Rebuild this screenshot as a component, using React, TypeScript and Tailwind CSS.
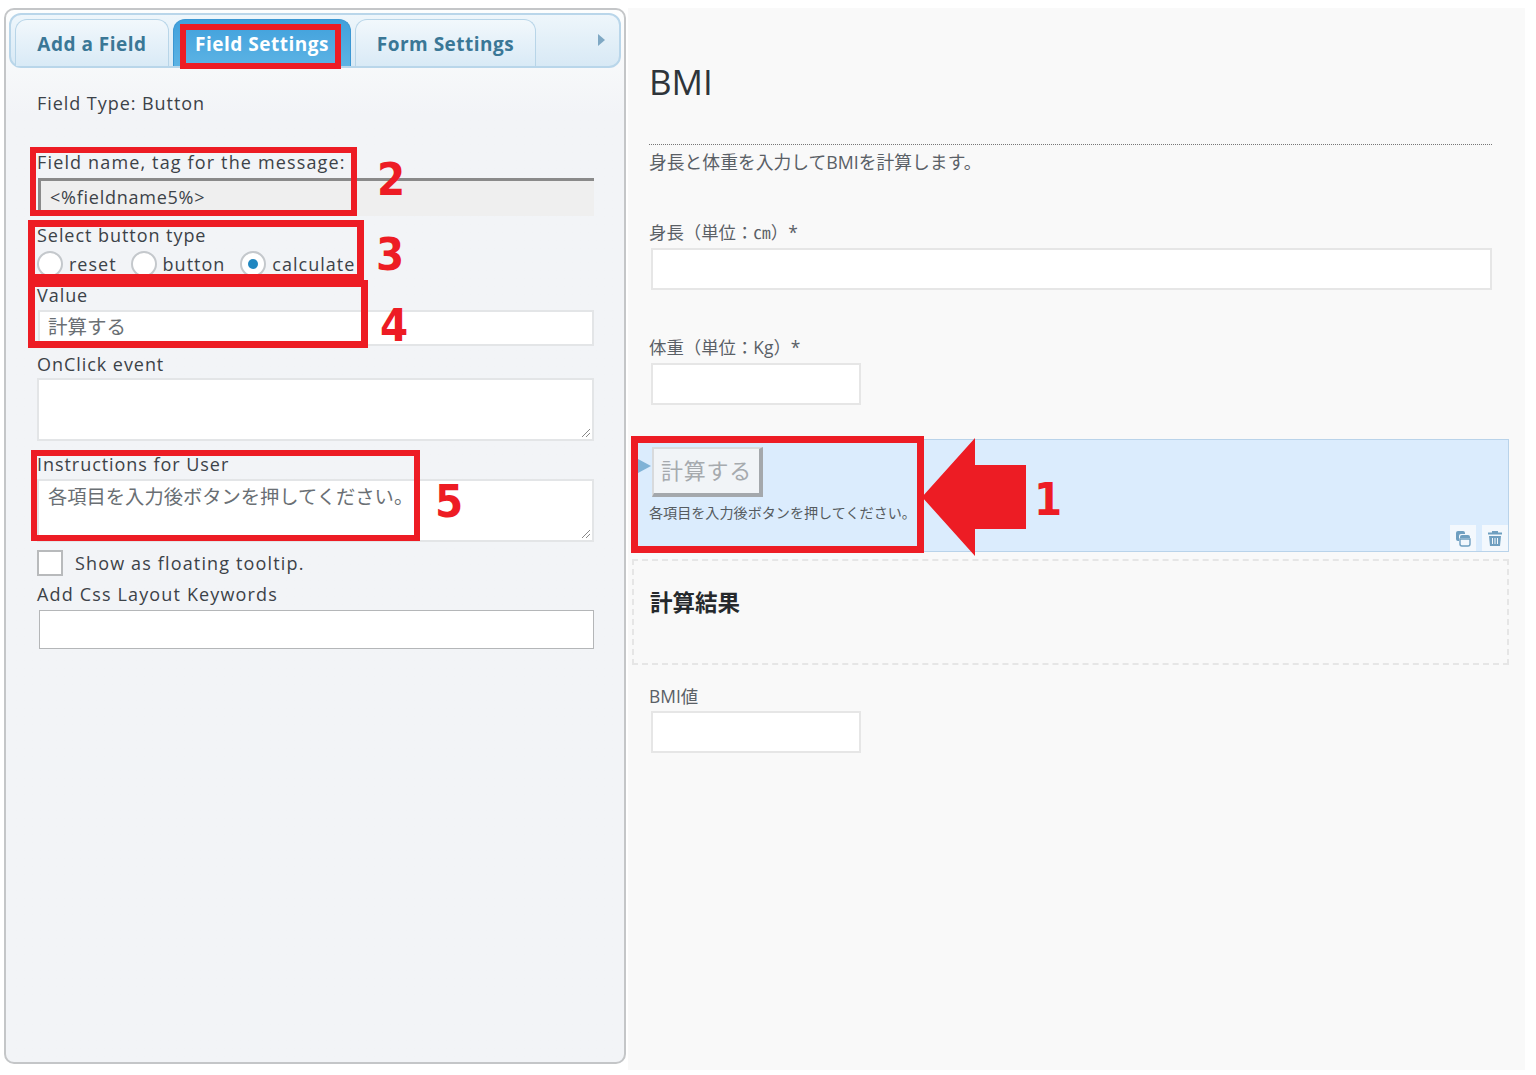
const font = "font-['Open_Sans','Noto_Sans_CJK_JP',sans-serif]";

const Label = ({ text, wide, className = "" }: { text: string; wide?: boolean; className?: string }) => (
  <div
    className={
      "h-[24px] text-[18px] leading-[24px] text-[#3c4248] whitespace-nowrap " +
      (wide ? "tracking-[1.15px] " : "tracking-[0.95px] ") +
      className
    }
  >
    {text}
  </div>
);

const Radio = ({ text, checked }: { text: string; checked?: boolean }) => (
  <div className="flex items-center">
    <span className="flex h-[26px] w-[26px] items-center justify-center rounded-full border-2 border-[#c4c8cc] bg-white">
      {checked && <span className="h-[10px] w-[10px] rounded-full bg-[#2187c0]" />}
    </span>
    <span className="ml-[6px] text-[18px] leading-[24px] tracking-[1px] text-[#3c4248]">{text}</span>
  </div>
);

const Grip = () => (
  <svg className="absolute bottom-[1px] right-[1px]" width="10" height="10" viewBox="0 0 10 10">
    <path d="M1 9 L9 1 M5 9 L9 5" stroke="#888" strokeWidth="1" />
  </svg>
);

const Tab = ({ text, active, width }: { text: string; active?: boolean; width: string }) => (
  <div
    className={
      width +
      " flex h-[47px] items-center justify-center rounded-t-[12px] border border-b-0 pt-[3px] text-[19px] font-bold tracking-[0.5px] " +
      (active
        ? "border-[#3b97d3] bg-gradient-to-b from-[#3fa0dc] to-[#5cb3e4] text-white"
        : "border-[#b8d5e8] bg-gradient-to-b from-[#f2f8fc] to-[#d9eaf6] text-[#3a7796]")
    }
  >
    {text}
  </div>
);

const Box = ({ className }: { className: string }) => (
  <div className={"absolute border-[#ed1c24] " + className} />
);

const Num = ({ text, className }: { text: string; className: string }) => (
  <div className={"absolute font-['DejaVu_Sans',sans-serif] text-[45px] font-bold leading-none text-[#ed1c24] [font-stretch:condensed] " + className}>
    {text}
  </div>
);

const FormLabel = ({ text, className = "" }: { text: string; className?: string }) => (
  <div className={"text-[17.4px] leading-[22px] text-[#5a6066] whitespace-nowrap " + className}>{text}</div>
);

function LeftPanel() {
  return (
    <div className="h-[1056px] w-[622px] shrink-0 rounded-[10px] border-2 border-[#c4c6c8] bg-gradient-to-b from-[#fdfefe] from-0% to-[#f2f4f7] to-[10%] px-[3px] pt-[3px]">
      <div className="flex h-[55px] items-end gap-[4px] rounded-[12px] border-2 border-[#b9d6ea] bg-gradient-to-b from-[#eef6fb] to-[#d8e9f5] pl-[4px]">
        <Tab text="Add a Field" width="w-[154px]" />
        <Tab text="Field Settings" width="w-[178px]" active />
        <Tab text="Form Settings" width="w-[181px]" />
        <svg className="mb-[19px] ml-[57px]" width="9" height="14" viewBox="0 0 9 14">
          <path d="M1 1 L8 7 L1 13 Z" fill="#7fa8c4" />
        </svg>
      </div>

      <div className="pl-[28px] pr-[27px]">
        <Label text="Field Type: Button" className="mt-[23px]" />

        <Label text="Field name, tag for the message:" wide className="mt-[35px]" />
        <div className="ml-[1px] mt-[4px] flex h-[38px] items-center border-l-[3px] border-t-[3px] border-[#8a8a8a] bg-[#efefef] pb-[2px] pl-[9px] text-[18px] tracking-[0.75px] text-[#3c4248]">
          {"<%fieldname5%>"}
        </div>

        <Label text="Select button type" className="mt-[7px]" />
        <div className="mt-[4px] flex h-[26px] items-center">
          <Radio text="reset" />
          <div className="ml-[14px]">
            <Radio text="button" />
          </div>
          <div className="ml-[15px]">
            <Radio text="calculate" checked />
          </div>
        </div>

        <Label text="Value" className="mt-[6px]" />
        <div className="ml-[1px] mt-[3px] flex h-[36px] items-center border-2 border-[#e3e5e7] bg-white pb-[2px] pl-[8px] text-[19.5px] text-[#6a6f74]">
          計算する
        </div>

        <Label text="OnClick event" className="mt-[6px]" />
        <div className="relative mt-[2px] h-[63px] border-2 border-[#e3e5e7] bg-white">
          <Grip />
        </div>

        <Label text="Instructions for User" className="mt-[11px]" />
        <div className="relative mt-[3px] h-[63px] border-2 border-[#e3e5e7] bg-white pl-[9px] pt-[2px] text-[19.3px] leading-[28px] text-[#6a6f74] whitespace-nowrap">
          各項目を入力後ボタンを押してください。
          <Grip />
        </div>

        <div className="mt-[8px] flex items-center">
          <span className="h-[26px] w-[26px] border-2 border-[#b8babc] bg-white" />
          <span className="ml-[12px] text-[18px] leading-[24px] tracking-[1.15px] text-[#3c4248]">Show as floating tooltip.</span>
        </div>

        <Label text="Add Css Layout Keywords" wide className="mt-[6px]" />
        <div className="ml-[2px] mt-[4px] h-[39px] border border-[#b4b6b8] bg-white" />
      </div>
    </div>
  );
}

function RightPanel() {
  return (
    <div className="ml-[2px] h-[1062px] w-[897px] shrink-0 bg-[#f9f9f9] pl-[4px] pr-[16px]">
      <div className="pl-[17px] pr-[17px]">
        <div className="mt-[49px] h-[50px] text-[35px] leading-[50px] text-[#2e343a]">BMI</div>
        <div className="mt-[37px] border-t border-dotted border-[#777]" />
        <div className="mt-[5px] text-[17.8px] leading-[24px] text-[#5a6066]">身長と体重を入力してBMIを計算します。</div>

        <FormLabel text="身長（単位：㎝）*" className="mt-[47px]" />
        <div className="ml-[2px] mt-[5px] h-[42px] border-2 border-[#e6e6e6] bg-white" />

        <FormLabel text="体重（単位：Kg）*" className="mt-[46px]" />
        <div className="ml-[2px] mt-[5px] h-[42px] w-[210px] border-2 border-[#e6e6e6] bg-white" />
      </div>

      <div className="relative mt-[34px] h-[113px] border border-[#b9d3ea] bg-[#dbecfd] pl-[16px] pt-[7px]">
        <svg className="absolute left-[5px] top-[19px]" width="13" height="14" viewBox="0 0 13 14">
          <path d="M0 0 L13 7 L0 14 Z" fill="#7fb2d6" />
        </svg>
        <div className="ml-[3px] flex h-[50px] w-[111px] items-center justify-center border-b-[4px] border-l-[2px] border-r-[4px] border-t-[2px] border-b-[#a4a8ac] border-l-[#d8dadc] border-r-[#a4a8ac] border-t-[#d8dadc] bg-[#f1f4f7] pb-[2px] text-[22px] tracking-[0.8px] text-[#a6aaae]">
          計算する
        </div>
        <div className="mt-[5px] text-[14.1px] leading-[22px] text-[#555b60] whitespace-nowrap">各項目を入力後ボタンを押してください。</div>
        <div className="absolute bottom-0 right-[32px] flex h-[26px] w-[26px] items-center justify-center bg-[#f3f8fd]">
          <svg width="16" height="17" viewBox="0 0 16 17" fill="#6f9fc0">
            <path d="M1 3 Q1 1 3 1 L8 1 Q10 1 10 3 L10 4 L6 4 Q4 4 4 6 L4 11 L3 11 Q1 11 1 9 Z" />
            <path d="M5 7 Q5 5 7 5 L13 5 Q15 5 15 7 L15 8 L5 8 Z" />
            <path d="M5 9 L15 9 L15 14 Q15 16 13 16 L7 16 Q5 16 5 14 Z" fill="none" stroke="#6f9fc0" strokeWidth="1.4" />
          </svg>
        </div>
        <div className="absolute bottom-0 right-0 flex h-[26px] w-[26px] items-center justify-center bg-[#f3f8fd]">
          <svg width="16" height="17" viewBox="0 0 16 17" fill="#6f9fc0">
            <path d="M5 1 L11 1 L11 2.5 L15 2.5 L15 4.5 L1 4.5 L1 2.5 L5 2.5 Z" />
            <path d="M2 6 L14 6 L13 16 L3 16 Z" />
            <path d="M5.5 8 V14 M8 8 V14 M10.5 8 V14" stroke="#f3f8fd" strokeWidth="1" />
          </svg>
        </div>
      </div>

      <div className="mt-[7px] h-[106px] border-2 border-dashed border-[#e6e6e6] pl-[16px] pt-[28px]">
        <div className="text-[22.5px] font-bold leading-[28px] text-[#26292c]">計算結果</div>
      </div>

      <div className="pl-[17px]">
        <FormLabel text="BMI値" className="mt-[20px]" />
        <div className="ml-[2px] mt-[4px] h-[42px] w-[210px] border-2 border-[#e6e6e6] bg-white" />
      </div>
    </div>
  );
}

export default function App() {
  return (
    <div className={"relative h-[1075px] w-[1536px] overflow-hidden bg-white " + font}>
      <div className="flex items-start pl-[4px] pt-[8px]">
        <LeftPanel />
        <RightPanel />
      </div>

      {/* annotations drawn over the screenshot */}
      <Box className="left-[180px] top-[24px] h-[45px] w-[161px] border-[6px]" />
      <Box className="left-[30px] top-[147px] h-[69px] w-[327px] border-[6px]" />
      <Box className="left-[28px] top-[220px] h-[61px] w-[336px] border-[7px]" />
      <Box className="left-[28px] top-[280px] h-[68px] w-[340px] border-[7px]" />
      <Box className="left-[31px] top-[450px] h-[91px] w-[389px] border-[6px]" />
      <Box className="left-[631px] top-[436px] h-[117px] w-[293px] border-[7px]" />
      <svg className="absolute left-[920px] top-[436px]" width="108" height="122" viewBox="0 0 108 122">
        <path d="M2 61 L55 2 L55 29 L106 29 L106 93 L55 93 L55 120 Z" fill="#ed1c24" />
      </svg>
      <Num text="1" className="left-[1034px] top-[477px]" />
      <Num text="2" className="left-[377px] top-[157px]" />
      <Num text="3" className="left-[376px] top-[232px]" />
      <Num text="4" className="left-[380px] top-[303px]" />
      <Num text="5" className="left-[435px] top-[479px]" />
    </div>
  );
}
